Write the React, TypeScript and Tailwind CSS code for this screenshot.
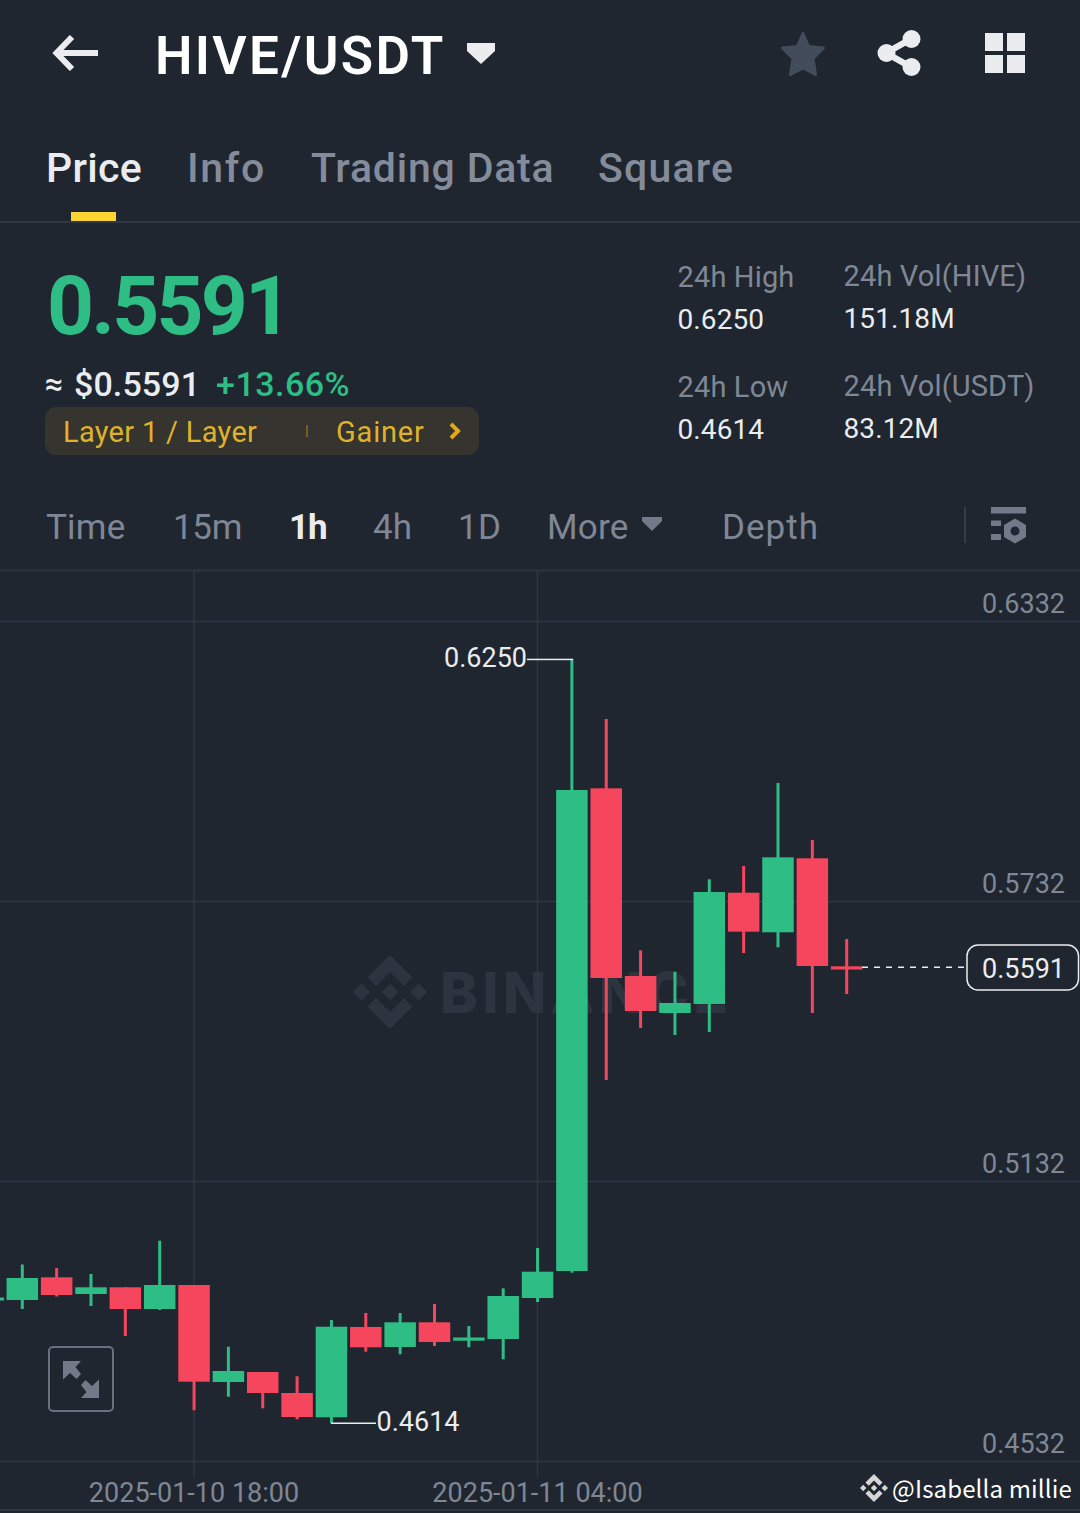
import React from "react";

type Candle = {
  up: boolean;
  high: number;
  top: number;
  bottom: number;
  low: number;
};

const CHART_TOP = 569;
const FIRST_X = 22.3;
const STEP = 34.35;
const BODY_WIDTH = 31.5;

const candles: Candle[] = [
  { up: true, high: 1264.5, top: 1278, bottom: 1300, low: 1309 },
  { up: false, high: 1268, top: 1277.3, bottom: 1295, low: 1296.5 },
  { up: true, high: 1274, top: 1287.3, bottom: 1294, low: 1306 },
  { up: false, high: 1287.3, top: 1287.3, bottom: 1309, low: 1336 },
  { up: true, high: 1240.7, top: 1285, bottom: 1309, low: 1310 },
  { up: false, high: 1285, top: 1285, bottom: 1381.7, low: 1410.3 },
  { up: true, high: 1346.7, top: 1371, bottom: 1382, low: 1396.7 },
  { up: false, high: 1372, top: 1372, bottom: 1393, low: 1408.3 },
  { up: false, high: 1376.3, top: 1393, bottom: 1417, low: 1419.3 },
  { up: true, high: 1320, top: 1326.7, bottom: 1417.3, low: 1423.3 },
  { up: false, high: 1313, top: 1327, bottom: 1347.3, low: 1351.7 },
  { up: true, high: 1313, top: 1322.3, bottom: 1347, low: 1354.3 },
  { up: false, high: 1304, top: 1322.3, bottom: 1342, low: 1346 },
  { up: true, high: 1326, top: 1337.5, bottom: 1340.7, low: 1347.3 },
  { up: true, high: 1288.3, top: 1296, bottom: 1339, low: 1359.3 },
  { up: true, high: 1248, top: 1271.7, bottom: 1298, low: 1302 },
  { up: true, high: 659, top: 790, bottom: 1271, low: 1272.7 },
  { up: false, high: 719, top: 788.3, bottom: 978, low: 1080 },
  { up: false, high: 950.3, top: 976, bottom: 1011, low: 1028 },
  { up: true, high: 971.7, top: 1003, bottom: 1013, low: 1035 },
  { up: true, high: 879.3, top: 892, bottom: 1004, low: 1032 },
  { up: false, high: 866, top: 892.7, bottom: 931.7, low: 953 },
  { up: true, high: 783, top: 857.3, bottom: 932.3, low: 947.3 },
  { up: false, high: 840, top: 858.3, bottom: 966, low: 1013 },
  { up: false, high: 939, top: 966.3, bottom: 969.5, low: 994 },
];

const gridLines = [
  { y: 621.5, label: "0.6332" },
  { y: 901.5, label: "0.5732" },
  { y: 1181.5, label: "0.5132" },
  { y: 1461.5, label: "0.4532" },
];

const timeLines = [
  { x: 194, label: "2025-01-10 18:00" },
  { x: 537.5, label: "2025-01-11 04:00" },
];

const BinanceMark = ({ className }: { className?: string }) => (
  <svg viewBox="0 0 74 74" className={className} fill="currentColor">
    <path d="M37 0 59.5 22.5 51 31 37 17 23 31 14.5 22.5Z" />
    <path d="M37 74 59.5 51.5 51 43 37 57 23 43 14.5 51.5Z" />
    <path d="M37 28.5 45.5 37 37 45.5 28.5 37Z" />
    <path d="M8.5 28.5 17 37 8.5 45.5 0 37Z" />
    <path d="M65.5 28.5 74 37 65.5 45.5 57 37Z" />
  </svg>
);

const Header = () => (
  <header className="flex h-[106px] items-center text-[#eaecef]">
    <svg viewBox="0 0 46 36" className="ml-[52px] h-9 w-[46px]" fill="none">
      <path d="M4 18H46M20 2 4.5 18 20 34" stroke="currentColor" strokeWidth="6" />
    </svg>
    <h1 className="mt-[5px] ml-[57px] w-[292px] text-[53px] leading-[60px] font-semibold tracking-[2.3px] whitespace-nowrap text-white">
      HIVE/USDT
    </h1>
    <svg viewBox="0 0 28 21" className="ml-5 h-[21px] w-7" fill="currentColor">
      <path d="M0 0H28V8L14 21 0 8Z" />
    </svg>
    <svg viewBox="0 0 46 46" className="mt-0.5 mr-[51px] ml-auto h-[46px] w-[46px]">
      <path
        d="M23 2.500 28.500 15.500 43.500 17 33 27.500 35.500 43.500 23 37 10.500 43.500 13 27.500 2.500 17 17.500 15.500Z"
        fill="#434c5a"
        stroke="#434c5a"
        strokeWidth="3"
        strokeLinejoin="round"
      />
    </svg>
    <svg viewBox="0 0 44 46" className="mr-[64px] h-[46px] w-11" fill="currentColor">
      <path d="M34 9 9 23 34 37" fill="none" stroke="currentColor" strokeWidth="6.5" />
      <circle cx="9.5" cy="23" r="9" />
      <circle cx="34.5" cy="9" r="9" />
      <circle cx="34.5" cy="37" r="9" />
    </svg>
    <div className="mr-[55px] grid grid-cols-2 gap-1">
      <i className="h-[18px] w-[18px] bg-[#eaecef]" />
      <i className="h-[18px] w-[18px] bg-[#eaecef]" />
      <i className="h-[18px] w-[18px] bg-[#eaecef]" />
      <i className="h-[18px] w-[18px] bg-[#eaecef]" />
    </div>
  </header>
);

const Tabs = () => (
  <nav className="flex h-[117px] border-b-2 border-[#303743] pl-[46px] text-[41px] leading-[48px] font-medium whitespace-nowrap text-[#848c9b]">
    <div className="flex w-[141px] flex-col pt-[38px] tracking-[0.3px] text-[#eaecef]">
      <span>Price</span>
      <span className="mt-auto ml-[25px] h-[9px] w-[45px] bg-[#fcd535]" />
    </div>
    <div className="w-[124px] pt-[38px] tracking-[1.7px]">Info</div>
    <div className="w-[287px] pt-[38px] tracking-[0.8px]">Trading Data</div>
    <div className="pt-[38px] tracking-[1.2px]">Square</div>
  </nav>
);

const Stat = ({ label, value }: { label: string; value: string }) => (
  <div className="h-[110px] whitespace-nowrap">
    <div className="text-[29px] leading-[42px] tracking-[0.15px] text-[#7f8796]">{label}</div>
    <div className="text-[28px] leading-[44px] tracking-[0.1px] text-[#eaecef]">{value}</div>
  </div>
);

const Summary = () => (
  <section className="flex h-[262px]">
    <div className="w-[677.5px] pt-[35px] pl-[45px]">
      <div className="ml-0.5 text-[82px] leading-[96px] font-bold tracking-[-2.8px] text-[#2ebd85]">0.5591</div>
      <div className="mt-2 mb-px flex h-11 items-center text-[34px] font-medium text-[#eaecef]">
        <span className="w-[29px] text-[32px]">≈</span>
        <span className="w-[142px] tracking-[0.1px]">$0.5591</span>
        <span className="tracking-[0.5px] text-[#2ebd85]">+13.66%</span>
      </div>
      <div className="flex h-12 w-[434px] items-center rounded-[11px] bg-[#35342e] pl-[18px] text-[29px] text-[#dfb22b]">
        <span className="mt-[3px] w-[243px] tracking-[0.3px]">Layer 1 / Layer</span>
        <i className="h-3 w-0.5 bg-[#7a5c26]" />
        <span className="mt-[3px] ml-7 tracking-[0.8px]">Gainer</span>
        <svg viewBox="0 0 12 18" className="mr-[18px] ml-auto h-[18px] w-3" fill="none">
          <path d="M2 2 9 9 2 16" stroke="#e0a81c" strokeWidth="4" />
        </svg>
      </div>
    </div>
    <div className="w-[166px] pt-[33px]">
      <Stat label="24h High" value="0.6250" />
      <Stat label="24h Low" value="0.4614" />
    </div>
    <div className="pt-[31.5px]">
      <Stat label="24h Vol(HIVE)" value="151.18M" />
      <Stat label="24h Vol(USDT)" value="83.12M" />
    </div>
  </section>
);

const Intervals = () => (
  <section className="flex h-[84px] items-center pl-[46px] text-[35px] text-[#7f8796]">
    <span className="mt-0.5 w-[127px] tracking-[0.2px]">Time</span>
    <span className="mt-0.5 w-[116px] tracking-[-0.3px]">15m</span>
    <span className="mt-0.5 w-[84px] font-bold tracking-[-1.2px] text-[#eaecef]">1h</span>
    <span className="mt-0.5 w-[85px]">4h</span>
    <span className="mt-0.5 w-[89px] tracking-[0.4px]">1D</span>
    <span className="mt-0.5 w-[95px] tracking-[0.2px]">More</span>
    <svg viewBox="0 0 20 14" className="mb-1.5 h-3.5 w-5" fill="#727a89">
      <path d="M0 0H20V4L10 14 0 4Z" />
    </svg>
    <span className="mt-0.5 ml-[60px] tracking-[1px]">Depth</span>
    <i className="mr-[25px] mb-1 ml-auto h-9 w-0.5 bg-[#363d49]" />
    <svg viewBox="0 0 36 37" className="mr-[53px] mb-[3px] h-[37px] w-9" fill="#727a89">
      <path d="M0 0H35V6.5H0ZM0 13.5H10V19H0ZM0 27H10V33H0Z" />
      <path
        fillRule="evenodd"
        d="M24 11.5 35 18V30L24 36.5 13 30V18ZM24 19.5a4.5 4.5 0 1 0 0 9 4.5 4.5 0 1 0 0-9Z"
      />
    </svg>
  </section>
);

const Chart = () => (
  <svg
    viewBox={`0 ${CHART_TOP} 1080 944`}
    className="block h-[944px] w-[1080px]"
    fontFamily="Roboto, 'Liberation Sans', sans-serif"
    fontSize="27"
  >
    {/* Watermark */}
    <g fill="#2e343f">
      <svg x="353" y="955" width="74" height="74">
        <BinanceMark className="text-[#2e343f]" />
      </svg>
      <text x="440" y="1012.5" fontSize="57" fontWeight="800" fontFamily="Inter, sans-serif" textLength="288">
        BINANCE
      </text>
    </g>

    {/* Grid */}
    <rect x="0" y="569" width="1080" height="3" fill="#29303b" />
    <rect x="0" y="1509" width="1080" height="2" fill="#303743" />
    {gridLines.map((line) => (
      <g key={line.label}>
        <rect x="0" y={line.y - 0.75} width="1080" height="1.5" fill="#303743" />
        <text x="1065" y={line.y - 8.8} textAnchor="end" fill="#7f8796">
          {line.label}
        </text>
      </g>
    ))}
    {timeLines.map((line) => (
      <g key={line.label}>
        <rect x={line.x - 0.75} y="571" width="1.5" height="906" fill="#303743" />
        <text x={line.x} y="1501.5" textAnchor="middle" fill="#7f8796">
          {line.label}
        </text>
      </g>
    ))}

    {/* Candles */}
    <rect x="0" y="1297.5" width="4" height="3" fill="#2ebd85" />
    {candles.map((c, i) => {
      const x = FIRST_X + STEP * i;
      return (
        <g key={i} fill={c.up ? "#2ebd85" : "#f6465d"}>
          <rect x={x - 1.5} y={c.high} width="3" height={c.low - c.high} />
          <rect x={x - BODY_WIDTH / 2} y={c.top} width={BODY_WIDTH} height={c.bottom - c.top} />
        </g>
      );
    })}

    {/* High and low markers */}
    <g fill="#eaecef">
      <text x="444" y="666.7">
        0.6250
      </text>
      <rect x="527" y="658.7" width="46" height="1.5" />
      <text x="376.5" y="1430.7">
        0.4614
      </text>
      <rect x="331" y="1422.5" width="45" height="1.5" />
    </g>

    {/* Last price */}
    <path d="M862 967.3H966" stroke="#eaecef" strokeWidth="1.5" strokeDasharray="6 6" />
    <rect x="967" y="945" width="111.5" height="45" rx="11" fill="#1f262f" stroke="#eaecef" strokeWidth="1.5" />
    <text x="982" y="977.5" fill="#eaecef">
      0.5591
    </text>
  </svg>
);

const App = () => {
  return (
    <main className="h-[1513px] w-[1080px] overflow-hidden bg-[#1f262f] font-[Roboto,'Liberation_Sans',sans-serif]">
      <Header />
      <Tabs />
      <Summary />
      <Intervals />
      <div className="relative">
        <Chart />
        <button className="absolute top-[777px] left-12 flex h-[66px] w-[66px] items-center justify-center rounded-[5px] border-2 border-[#697180]">
          <svg viewBox="0 0 36 37" className="h-[37px] w-9" fill="#727a89">
            <path d="M0 0H18L12.5 6 18 13 13.5 18 7 12 0 18.5Z" />
            <path d="M36 37H18L23.5 31 18 24 22.5 19 29 25 36 18.5Z" />
          </svg>
        </button>
        <div className="absolute right-2 bottom-[9px] flex items-center gap-1 font-['Noto_Sans_CJK_SC',sans-serif] text-2xl text-white">
          <BinanceMark className="h-7 w-7 text-[#d6d6d6]" />
          <span className="tracking-[0.15px]">@Isabella millie</span>
        </div>
      </div>
    </main>
  );
};

export default App;
